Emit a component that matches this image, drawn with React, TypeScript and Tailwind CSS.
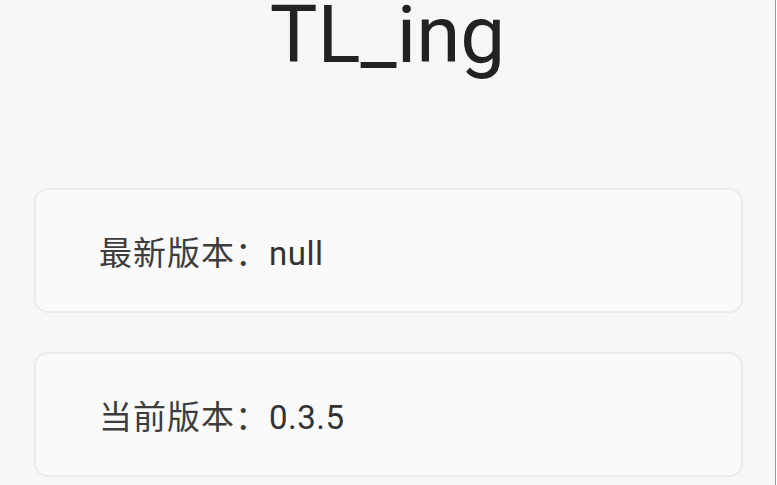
import React from 'react';

const fontStack = { fontFamily: "Roboto, 'Noto Sans CJK SC', sans-serif" };

const VersionCard: React.FC<{ label: string; value: string }> = ({ label, value }) => (
  <div className="flex h-[125px] items-center rounded-[14px] border-2 border-[#ebebeb] bg-[#fafafa] pt-[5px] pl-[63px]">
    <span className="text-[33px] leading-none tracking-[1px] text-[#3d3d3d]">{label}</span>
    <span className="text-[33px] leading-none tracking-[0.5px] text-[#333]">{value}</span>
  </div>
);

export default function App() {
  return (
    <div className="flex h-[485px] w-[777px] overflow-hidden bg-[#f7f7f7]" style={fontStack}>
      <div className="flex w-[775px] flex-col">
        <h1 className="text-center text-[80px] leading-[70px] font-normal text-[#222]">TL_ing</h1>

        <div className="mt-[118px] ml-[34px] mr-[32px] flex flex-col gap-[39px]">
          <VersionCard label="最新版本：" value="null" />
          <VersionCard label="当前版本：" value="0.3.5" />
        </div>
      </div>
      {/* Edge line */}
      <div className="w-px bg-[#9a9a9a]" />
      <div className="w-px bg-white" />
    </div>
  );
}
